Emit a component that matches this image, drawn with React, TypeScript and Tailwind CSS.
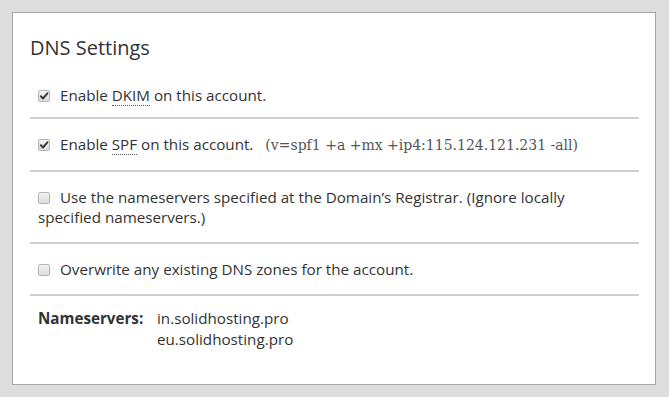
import React from 'react'

const Box: React.FC<{ checked?: boolean }> = ({ checked }) => (
  <span className="inline-block align-[-1px] mr-[10px] w-[12px] h-[12px] rounded-[2px] border border-[#b4b4b4] bg-gradient-to-b from-[#f2f2f2] to-[#dedede] relative">
    {checked && (
      <svg viewBox="0 0 12 12" className="absolute -left-px -top-px w-[12px] h-[12px]">
        <path d="M2.8 6.2 L4.9 8.5 L9.4 3.3" fill="none" stroke="#3a3a3a" strokeWidth="2" strokeLinecap="round" strokeLinejoin="round" />
      </svg>
    )}
  </span>
)

const Abbr: React.FC<{ children: React.ReactNode }> = ({ children }) => (
  <span className="border-b border-dotted border-[#555]">{children}</span>
)

const Row: React.FC<{ first?: boolean; children: React.ReactNode }> = ({ first, children }) => (
  <div className={`border-b-2 border-[#cfcfcf] pt-[15px] pl-[8px] pr-[8px] text-[15.2px] leading-[20px] ${first ? 'pb-[12px]' : 'pb-[15px]'}`}>
    {children}
  </div>
)

export default function App() {
  return (
    <div className="min-h-[397px] bg-[#dddddd] pl-[12px] pr-[13px] pt-[12px] pb-[13px] text-[#333] font-['Open_Sans',sans-serif]">
      <div className="bg-white border border-[#a6a6a6] pl-[17px] pr-[16px] pt-[21px] pb-[34px]">
        <h2 className="text-[20px] leading-[28px] font-normal mb-[8px]">DNS Settings</h2>

        <Row first>
          <Box checked />
          Enable <Abbr>DKIM</Abbr> on this account.
        </Row>

        <Row>
          <Box checked />
          Enable <Abbr>SPF</Abbr> on this account.
          <span className="ml-[12px] font-['DejaVu_Serif',serif] text-[14px] text-[#555]">
            (v=spf1 +a +mx +ip4:115.124.121.231 -all)
          </span>
        </Row>

        <Row>
          <Box />
          Use the nameservers specified at the Domain’s Registrar. (Ignore locally
          <br />
          specified nameservers.)
        </Row>

        <Row>
          <Box />
          Overwrite any existing DNS zones for the account.
        </Row>

        <div className="grid grid-cols-[119px_1fr] pl-[8px] pt-[12px] text-[15.2px] leading-[21px]">
          <div className="font-bold">Nameservers:</div>
          <div>
            <div>in.solidhosting.pro</div>
            <div>eu.solidhosting.pro</div>
          </div>
        </div>
      </div>
    </div>
  )
}
